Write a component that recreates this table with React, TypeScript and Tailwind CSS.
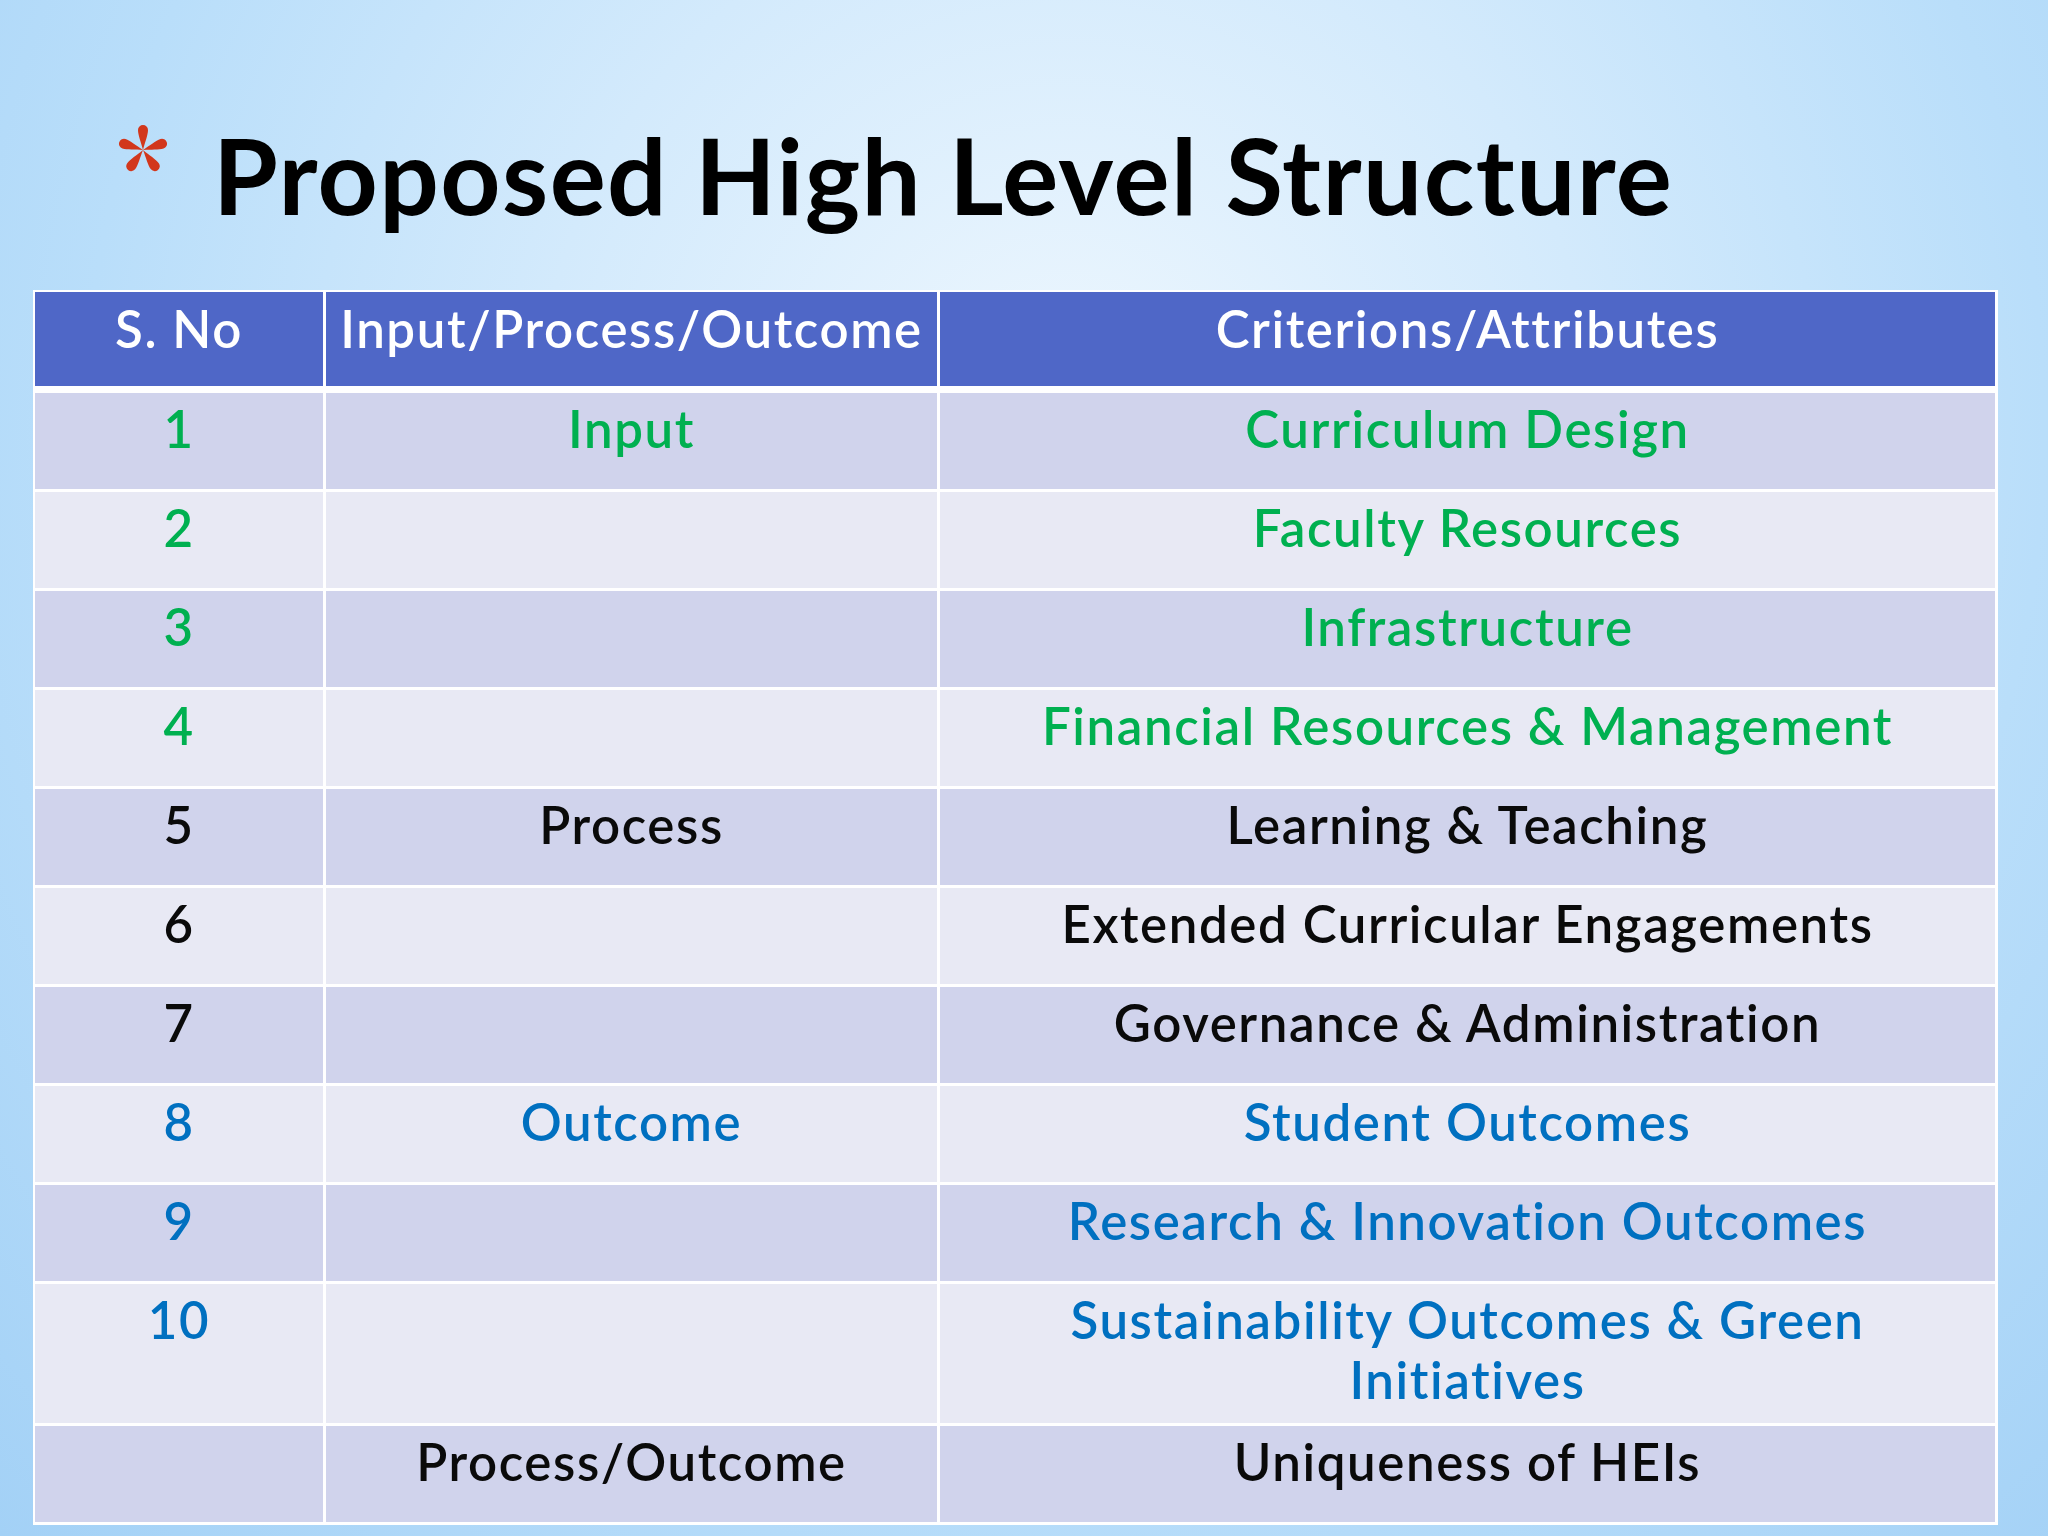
import React from "react";

type Row = {
  no: string;
  ipo: string;
  crit: React.ReactNode;
  color: string;
  h: string;
  odd: boolean;
};

const GREEN = "text-[#00b050]";
const BLUE = "text-[#0070c0]";
const BLACK = "text-[#0a0a0a]";

const rows: Row[] = [
  { no: "1", ipo: "Input", crit: "Curriculum Design", color: GREEN, h: "h-[96px]", odd: true },
  { no: "2", ipo: "", crit: "Faculty Resources", color: GREEN, h: "h-[96px]", odd: false },
  { no: "3", ipo: "", crit: "Infrastructure", color: GREEN, h: "h-[96px]", odd: true },
  { no: "4", ipo: "", crit: "Financial Resources & Management", color: GREEN, h: "h-[96px]", odd: false },
  { no: "5", ipo: "Process", crit: "Learning & Teaching", color: BLACK, h: "h-[96px]", odd: true },
  { no: "6", ipo: "", crit: "Extended Curricular Engagements", color: BLACK, h: "h-[96px]", odd: false },
  { no: "7", ipo: "", crit: "Governance & Administration", color: BLACK, h: "h-[96px]", odd: true },
  { no: "8", ipo: "Outcome", crit: "Student Outcomes", color: BLUE, h: "h-[96px]", odd: false },
  { no: "9", ipo: "", crit: "Research & Innovation Outcomes", color: BLUE, h: "h-[96px]", odd: true },
  {
    no: "10",
    ipo: "",
    crit: (
      <>
        Sustainability Outcomes &amp; Green
        <br />
        Initiatives
      </>
    ),
    color: BLUE,
    h: "h-[139px]",
    odd: false,
  },
  { no: "", ipo: "Process/Outcome", crit: "Uniqueness of HEIs", color: BLACK, h: "h-[96px]", odd: true },
];

function Asterisk() {
  const petal = "M0,0 C-2,-8 -5,-15 -5,-20 A5,5 0 0 1 5,-20 C5,-15 2,-8 0,0 Z";
  return (
    <svg width="50" height="47" viewBox="-25 -25 50 47" className="mt-[14px] shrink-0">
      {[0, 72, 144, 216, 288].map((a) => (
        <path key={a} d={petal} fill="#d2371c" transform={`rotate(${a})`} />
      ))}
    </svg>
  );
}

function Cell({ children, className }: { children?: React.ReactNode; className: string }) {
  return (
    <div className={`flex justify-center text-center pt-[6px] whitespace-nowrap ${className}`}>
      <div>{children}</div>
    </div>
  );
}

export default function App() {
  return (
    <div
      className="w-[2048px] h-[1536px] overflow-hidden bg-[radial-gradient(ellipse_at_52%_28%,#eef7fe_0%,#d3eafc_35%,#b9defa_65%,#a3d1f6_100%)] flex flex-col"
      style={{ fontFamily: "Lato, 'Open Sans', sans-serif" }}
    >
      <div className="flex items-start pl-[118px] pt-[111px]">
        <Asterisk />
        <h1 className="ml-[45px] text-[105px] leading-[126px] font-bold tracking-[1.4px] text-black">
          Proposed High Level Structure
        </h1>
      </div>

      <div className="ml-[33px] mt-[53px] w-[1965px] bg-white pt-[2px] pl-[2px] pr-[3px] pb-[3px] flex flex-col gap-[3px] text-[51px] leading-[60px] tracking-[1.6px] font-semibold">
        <div className="grid grid-cols-[288px_611px_1055px] gap-x-[3px] h-[94px] mb-[4px] text-white">
          <Cell className="bg-[#4f67c7] pt-[7px]">S. No</Cell>
          <Cell className="bg-[#4f67c7] pt-[7px]">Input/Process/Outcome</Cell>
          <Cell className="bg-[#4f67c7] pt-[7px]">Criterions/Attributes</Cell>
        </div>
        {rows.map((r, i) => {
          const bg = r.odd ? "bg-[#d0d3ec]" : "bg-[#e8e9f4]";
          return (
            <div key={i} className={`grid grid-cols-[288px_611px_1055px] gap-x-[3px] ${r.h} ${r.color}`}>
              <Cell className={bg}>{r.no}</Cell>
              <Cell className={bg}>{r.ipo}</Cell>
              <Cell className={bg}>{r.crit}</Cell>
            </div>
          );
        })}
      </div>
    </div>
  );
}
